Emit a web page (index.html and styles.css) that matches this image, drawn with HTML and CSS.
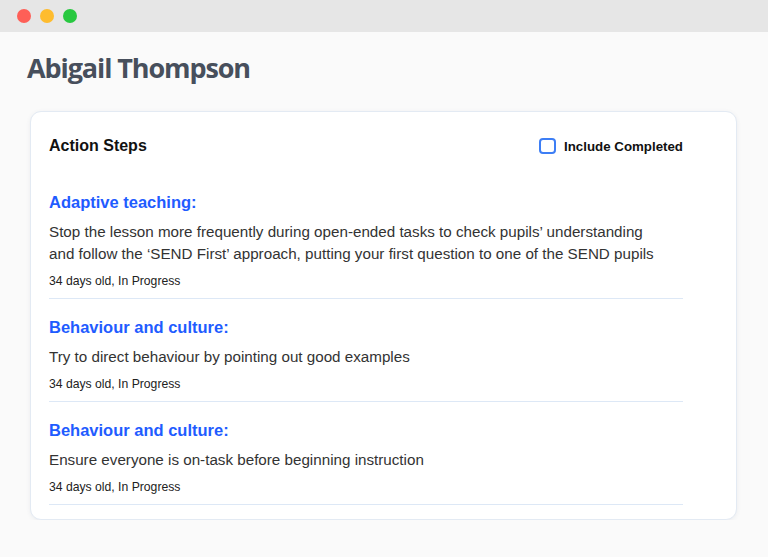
FILE: index.html
```html
<!DOCTYPE html>
<html lang="en">
<head>
    <meta charset="UTF-8">
    <meta name="viewport" content="width=device-width, initial-scale=1.0">
    <title>Abigail Thompson - Action Steps</title>
    <link rel="stylesheet" href="styles.css">
</head>
<body>

<div class="titlebar">
    <span class="dot dot-red"></span>
    <span class="dot dot-yellow"></span>
    <span class="dot dot-green"></span>
</div>

<main class="page">
    <h1 class="teacher-name">Abigail Thompson</h1>

    <section class="card">
        <div class="card-header">
            <h2>Action Steps</h2>
            <label class="toggle">
                <span class="checkbox"></span>
                Include Completed
            </label>
        </div>

        <div class="step">
            <h3>Adaptive teaching:</h3>
            <p class="step-text">Stop the lesson more frequently during open-ended tasks to check pupils’ understanding and follow the ‘SEND First’ approach, putting your first question to one of the SEND pupils</p>
            <p class="step-meta">34 days old, In Progress</p>
        </div>
        <div class="step">
            <h3>Behaviour and culture:</h3>
            <p class="step-text">Try to direct behaviour by pointing out good examples</p>
            <p class="step-meta">34 days old, In Progress</p>
        </div>
        <div class="step">
            <h3>Behaviour and culture:</h3>
            <p class="step-text">Ensure everyone is on-task before beginning instruction</p>
            <p class="step-meta">34 days old, In Progress</p>
        </div>
    </section>
</main>

</body>
</html>
```

FILE: styles.css
```css
body {
    margin: 0;
    background-color: #fafafa;
    font-family: 'Liberation Sans', Arial, sans-serif;
    color: #333;
}

.titlebar {
    height: 32px;
    background-color: #e6e6e6;
    display: flex;
    align-items: center;
    gap: 9px;
    padding-left: 17px;
}

.dot {
    width: 14px;
    height: 14px;
    border-radius: 50%;
}

.dot-red { background-color: #fe5f57; }
.dot-yellow { background-color: #febc2e; }
.dot-green { background-color: #28c840; }

.page {
    padding: 18px 30px 0 30px;
}

.teacher-name {
    margin: 0 0 0 -3px;
    font-family: 'Open Sans', sans-serif;
    font-weight: 700;
    font-size: 27px;
    line-height: 36px;
    color: #474f5c;
    letter-spacing: -1.1px;
}

.card {
    margin-top: 25px;
    width: 707px;
    box-sizing: border-box;
    background-color: #fff;
    border: 1.5px solid #e3eaf3;
    border-radius: 11px;
    box-shadow: 0 1px 4px rgba(60, 80, 120, 0.08);
    padding: 23px 53px 14px 18px;
}

.card-header {
    display: flex;
    justify-content: space-between;
    align-items: center;
    height: 22px;
    margin-bottom: 36px;
}

.card-header h2 {
    margin: 0;
    font-size: 16px;
    font-weight: 700;
    color: #111;
    line-height: 22px;
}

.toggle {
    display: flex;
    align-items: center;
    gap: 8px;
    font-size: 13.3px;
    font-weight: 700;
    color: #111;
    cursor: pointer;
}

.checkbox {
    width: 13px;
    height: 12px;
    border: 2px solid #3d7ef5;
    border-radius: 4px;
    background-color: #fff;
}

.step {
    border-bottom: 1px solid #dde8f6;
    padding-bottom: 9px;
}

.step + .step {
    padding-top: 19px;
}

.step h3 {
    margin: 0 0 10px 0;
    font-size: 16.5px;
    line-height: 18px;
    font-weight: 700;
    color: #1f5cff;
}

.step-text {
    max-width: 612px;
    margin: 0 0 8px 0;
    font-size: 15.2px;
    line-height: 22px;
    color: #333;
}

.step-meta {
    margin: 0;
    font-size: 12.2px;
    line-height: 16px;
    color: #222;
}
```
